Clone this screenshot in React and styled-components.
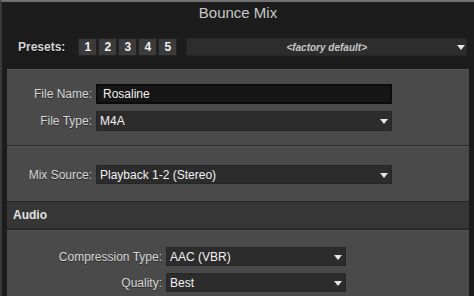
import React from "react";
import styled, { createGlobalStyle } from "styled-components";

const Global = createGlobalStyle`
  html, body { margin: 0; padding: 0; background: #1c1c1c; }
  body { font-family: "Liberation Sans", Arial, sans-serif; }
`;

const Window = styled.div`
  width: 474px;
  height: 296px;
  overflow: hidden;
  box-sizing: border-box;
  background: #1c1c1c;
  border-top: 2px solid #6f6f6f;
  border-left: 2px solid #3a3a3a;
  display: flex;
  flex-direction: column;
`;

const TitleBar = styled.div`
  height: 22px;
  display: flex;
  align-items: center;
  justify-content: center;
  color: #c9c9c9;
  font-size: 15px;
`;

const PresetRow = styled.div`
  height: 47px;
  display: flex;
  align-items: center;
  padding-left: 16px;
  padding-right: 5px;
  box-sizing: border-box;
  padding-top: 2px;
`;

const PresetLabel = styled.span`
  color: #d4d4d4;
  font-weight: bold;
  font-size: 12px;
  margin-right: 13px;
  text-shadow: 0 1px 0 #000;
`;

const PresetButtons = styled.div`
  display: flex;
  gap: 1px;
  margin-right: 9px;
`;

const PresetButton = styled.div`
  width: 19px;
  height: 18px;
  box-sizing: border-box;
  background: #3b3b3b;
  border: 1px solid #242424;
  color: #f0f0f0;
  font-weight: bold;
  font-size: 12px;
  display: flex;
  align-items: center;
  justify-content: center;
`;

const FactorySelect = styled.div`
  flex: 1;
  height: 18px;
  box-sizing: border-box;
  background: #2d2d2d;
  border: 1px solid #262626;
  position: relative;
  display: flex;
  align-items: center;
  justify-content: center;
  color: #c8c8c8;
  font-size: 10px;
  font-style: italic;
  font-weight: bold;
  margin-right: 2px;
`;

const Arrow = styled.span`
  position: absolute;
  right: ${(p) => p.$right || 6}px;
  top: 50%;
  margin-top: -2px;
  width: 0;
  height: 0;
  border-left: 4px solid transparent;
  border-right: 4px solid transparent;
  border-top: 5px solid #e6e6e6;
`;

const Body = styled.div`
  flex: 1;
  margin-left: 5px;
  margin-right: 5px;
  display: flex;
  flex-direction: column;
  gap: 1px;
  background: #262626;
`;

const Panel = styled.div`
  background: #4a4a4a;
  border-top: 1px solid #555;
  padding: ${(p) => p.$pad};
  display: flex;
  flex-direction: column;
  gap: 7px;
`;

const SectionHeader = styled.div`
  background: #363636;
  height: 26px;
  display: flex;
  align-items: center;
  padding-left: 6px;
  color: #e2e2e2;
  font-weight: bold;
  font-size: 12px;
  border-bottom: 1px solid #2a2a2a;
`;

const Row = styled.div`
  display: flex;
  align-items: center;
`;

const Label = styled.div`
  width: ${(p) => p.$w}px;
  text-align: right;
  padding-right: 4px;
  box-sizing: border-box;
  color: #d6d6d6;
  font-size: 12px;
  text-shadow: 0 1px 0 #2a2a2a;
`;

const TextInput = styled.div`
  width: ${(p) => p.$w}px;
  height: 20px;
  box-sizing: border-box;
  background: #161616;
  border: 2px solid #0c0c0c;
  color: #f2f2f2;
  font-size: 12px;
  display: flex;
  align-items: center;
  padding-left: 5px;
`;

const Select = styled.div`
  position: relative;
  width: ${(p) => p.$w}px;
  height: ${(p) => p.$h || 20}px;
  box-sizing: border-box;
  background: #2c2c2c;
  border: 1px solid #262626;
  color: #f2f2f2;
  font-size: 12px;
  display: flex;
  align-items: center;
  padding-left: 3px;
`;

export default function App() {
  return (
    <>
      <Global />
      <Window>
        <TitleBar>Bounce Mix</TitleBar>
        <PresetRow>
          <PresetLabel>Presets:</PresetLabel>
          <PresetButtons>
            {[1, 2, 3, 4, 5].map((n) => (
              <PresetButton key={n}>{n}</PresetButton>
            ))}
          </PresetButtons>
          <FactorySelect>
            &lt;factory default&gt;
            <Arrow $right={1} />
          </FactorySelect>
        </PresetRow>
        <Body>
          <Panel $pad="14px 0 14px 0">
            <Row>
              <Label $w={89}>File Name:</Label>
              <TextInput $w={296}>Rosaline</TextInput>
            </Row>
            <Row>
              <Label $w={89}>File Type:</Label>
              <Select $w={296}>
                M4A
                <Arrow $right={3} />
              </Select>
            </Row>
          </Panel>
          <Panel $pad="18px 0 17px 0">
            <Row>
              <Label $w={89}>Mix Source:</Label>
              <Select $w={296} $h={19}>
                Playback 1-2 (Stereo)
                <Arrow $right={3} />
              </Select>
            </Row>
          </Panel>
          <SectionHeader>Audio</SectionHeader>
          <Panel $pad="16px 0 4px 0">
            <Row>
              <Label $w={159}>Compression Type:</Label>
              <Select $w={180} $h={19}>
                AAC (VBR)
                <Arrow $right={3} />
              </Select>
            </Row>
            <Row>
              <Label $w={159}>Quality:</Label>
              <Select $w={180} $h={19}>
                Best
                <Arrow $right={3} />
              </Select>
            </Row>
          </Panel>
        </Body>
      </Window>
    </>
  );
}
